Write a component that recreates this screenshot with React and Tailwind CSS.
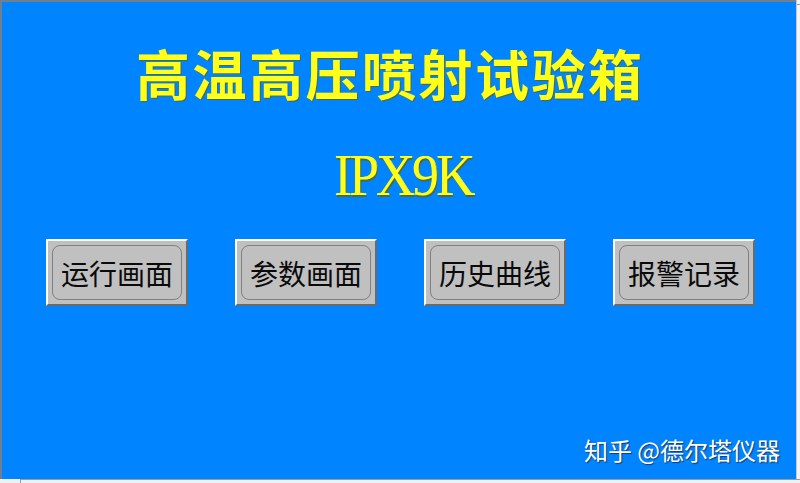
import React from 'react';

const BUTTONS = ['运行画面', '参数画面', '历史曲线', '报警记录'];

function PanelButton({ label }) {
    return (
        <div className="w-[142px] h-[67px] bg-[#c0c0c0] border-t-2 border-l-2 border-t-white border-l-white border-b-2 border-r-2 border-b-[#6a6a6a] border-r-[#6a6a6a] p-[4px]">
            <div className="w-full h-full rounded-[8px] border border-[#808080] flex items-center justify-center">
                <span className="text-[28px] leading-none text-[#0a0a0a] font-['Noto_Sans_CJK_SC',sans-serif] font-normal">
                    {label}
                </span>
            </div>
        </div>
    );
}

export default function App() {
    return (
        <div className="w-[800px] h-[483px] bg-[#e8e8e8] flex flex-col overflow-hidden">
            <div className="flex flex-1 min-h-0">
                {/* Main blue screen */}
                <div className="w-[796px] h-[479px] bg-[#0084ff] border-t-2 border-l-2 border-t-[#6f7f8f] border-l-[#6f7f8f] flex flex-col">
                    {/* Title */}
                    <div className="h-[70px] mt-[36px] pl-[134px] flex items-center">
                        <h1 className="text-[54px] leading-none font-bold text-[#ffff1a] font-['Noto_Sans_CJK_SC',sans-serif] tracking-[2.5px] [text-shadow:1px_1px_0_#4a6a40]">
                            高温高压喷射试验箱
                        </h1>
                    </div>

                    {/* Model */}
                    <div className="pl-[332px] mt-[40px] h-[56px] flex items-center">
                        <span className="text-[54px] leading-none text-[#ffff1a] font-['Liberation_Serif',serif] tracking-[-3px] scale-y-[1.08] [text-shadow:1px_1px_0_#4a6a40,0.5px_0_0_#ffff1a]">
                            IPX9K
                        </span>
                    </div>

                    {/* Navigation buttons */}
                    <div className="flex gap-[47px] pl-[44px] mt-[35px]">
                        {BUTTONS.map(b => (
                            <PanelButton key={b} label={b} />
                        ))}
                    </div>

                    {/* Watermark */}
                    <div className="flex-1 flex items-end justify-end pr-[16px] pb-[17px]">
                        <span className="text-[24px] leading-none text-white font-['Noto_Sans_CJK_SC',sans-serif] [text-shadow:1px_1px_1px_#1a3a6a]">
                            知乎 @德尔塔仪器
                        </span>
                    </div>
                </div>
                {/* Right edge strip */}
                <div className="flex-1 bg-[#f4f4f4] border-l border-[#c8c8c8] flex flex-col gap-[14px] pt-[4px]">
                    <div className="h-[10px] border-t border-[#9a9a9a]" />
                </div>
            </div>
            {/* Bottom strip */}
            <div className="h-[4px] bg-[#f0f0f0] flex">
                <div className="w-[20px]" />
                <div className="flex-1 border-t border-l border-[#9a9a9a]" />
            </div>
        </div>
    );
}
